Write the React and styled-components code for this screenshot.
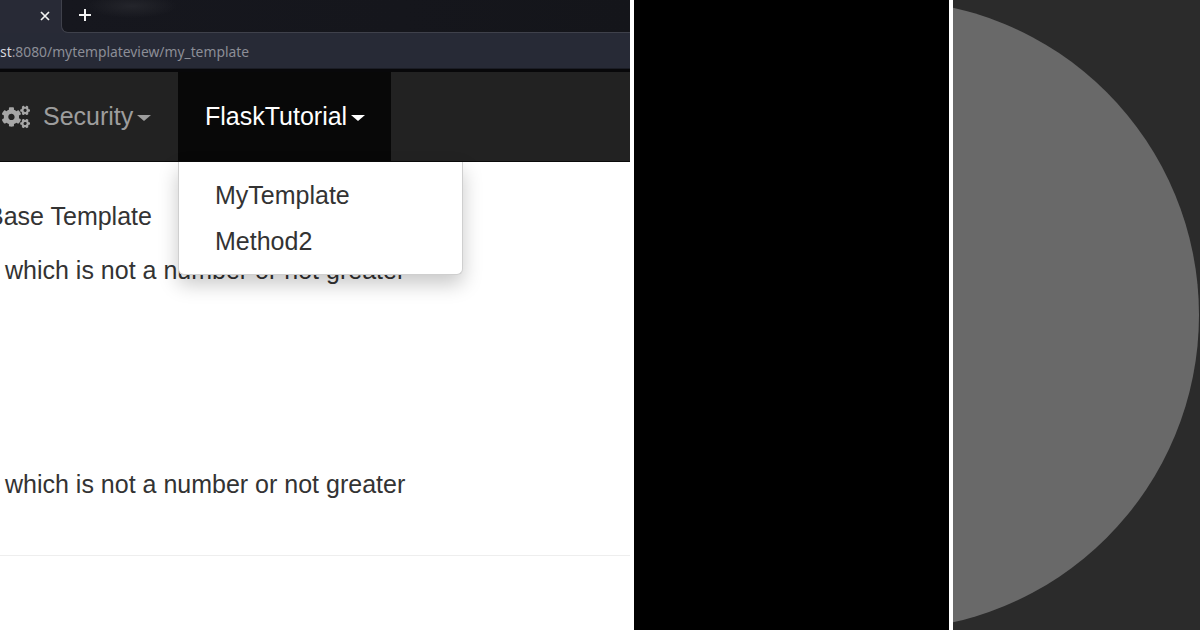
import React from 'react';
import styled, { createGlobalStyle } from 'styled-components';
import { FaCogs } from 'react-icons/fa';

const GlobalStyle = createGlobalStyle`
    html, body {
        margin: 0;
        padding: 0;
        background: #ffffff;
    }
    body {
        font-family: "Liberation Sans", Arial, sans-serif;
    }
`;

const Page = styled.div`
    display: grid;
    grid-template-columns: 630px 4px 315px 4px 247px;
    width: 1200px;
    height: 630px;
    overflow: hidden;
    background: #ffffff;
`;

const Gap = styled.div`
    background: #ffffff;
`;

const BlackPanel = styled.div`
    background: #000000;
`;

const CirclePanel = styled.div`
    background: #2b2b2b;
    overflow: hidden;
`;

const Shot = styled.div`
    position: relative;
    display: flex;
    flex-direction: column;
    height: 630px;
    overflow: hidden;
`;

const TabStrip = styled.div`
    display: flex;
    height: 33px;
    background: #282a36;
`;

const ActiveTab = styled.div`
    display: flex;
    align-items: center;
    justify-content: flex-end;
    width: 61px;
    padding: 0 11px 2px 0;
    box-sizing: border-box;
`;

const TabRest = styled.div`
    flex: 1;
    display: flex;
    align-items: center;
    padding: 0 0 2px 16px;
    background:
        radial-gradient(ellipse 45px 12px at 70px 6px, #24252b, transparent),
        linear-gradient(90deg, #16171e, #15161c 60%, #14151a);
    border-left: 1px solid #3f414b;
    border-bottom: 1px solid #3f414b;
    border-bottom-left-radius: 7px;
`;

const UrlBar = styled.div`
    display: flex;
    align-items: center;
    height: 36px;
    padding-top: 1px;
    box-sizing: border-box;
    background: #272a36;
    border-bottom: 1px solid #1b1d25;
    font-family: "Noto Sans", sans-serif;
    font-size: 13.85px;
    color: #8c8e97;
`;

const UrlHost = styled.span`
    color: #d8d8dc;
`;

const Navbar = styled.nav`
    display: flex;
    height: 93px;
    box-sizing: border-box;
    background: #222222;
    border-top: 3px solid #08080a;
    border-bottom: 1px solid #0a0a0a;
`;

const SecurityItem = styled.div`
    display: flex;
    align-items: center;
    width: 178px;
    padding-left: 2px;
    box-sizing: border-box;
    color: #9d9d9d;
    font-size: 25px;
`;

const GearIcon = styled(FaCogs)`
    width: 28px;
    height: 28px;
    margin-right: 13px;
    color: #a6a6a6;
`;

const ActiveItem = styled.div`
    display: flex;
    align-items: center;
    width: 213px;
    padding-left: 27px;
    box-sizing: border-box;
    background: #080808;
    color: #ffffff;
    font-size: 25px;
`;

const Caret = styled.span`
    width: 0;
    height: 0;
    margin: 2px 0 0 ${(p) => p.$gap}px;
    border-top: 6px solid ${(p) => p.$color};
    border-left: 7px solid transparent;
    border-right: 7px solid transparent;
`;

const Content = styled.main`
    flex: 1;
    padding-top: 40px;
    color: #333333;
    font-size: 25px;
    line-height: 28px;
`;

const Line = styled.p`
    margin: 0 0 ${(p) => p.$after}px ${(p) => p.$left}px;
    white-space: nowrap;
`;

const Rule = styled.hr`
    margin: 0;
    border: 0;
    border-top: 1px solid #eeeeee;
`;

const Dropdown = styled.ul`
    position: absolute;
    top: 162px;
    left: 178px;
    width: 285px;
    height: 113px;
    margin: 0;
    padding: 10px 0 0 36px;
    box-sizing: border-box;
    list-style: none;
    background: #ffffff;
    border: 1px solid #cfcfcf;
    border-top: 0;
    border-radius: 0 0 6px 6px;
    box-shadow: 0 9px 20px rgba(0, 0, 0, 0.22);
    color: #333333;
    font-size: 25px;
`;

const DropdownItem = styled.li`
    height: 46px;
    line-height: 47px;
`;

const Circle = () => (
    <svg width="247" height="630" viewBox="953 0 247 630">
        <circle cx="884" cy="315" r="315" fill="#696969" />
    </svg>
);

const App = () => {
    return (
        <Page>
            <GlobalStyle />
            <Shot>
                <TabStrip>
                    <ActiveTab>
                        <svg width="10" height="10" viewBox="0 0 10 10">
                            <path d="M1 1l8 8M9 1l-8 8" stroke="#f2f2f2" strokeWidth="1.7" />
                        </svg>
                    </ActiveTab>
                    <TabRest>
                        <svg width="14" height="14" viewBox="0 0 14 14">
                            <path d="M7 1v12M1 7h12" stroke="#f2f2f2" strokeWidth="2" />
                        </svg>
                    </TabRest>
                </TabStrip>
                <UrlBar>
                    <UrlHost>st</UrlHost>:8080/mytemplateview/my_template
                </UrlBar>
                <Navbar>
                    <SecurityItem>
                        <GearIcon />
                        Security
                        <Caret $gap={4} $color="#9d9d9d" />
                    </SecurityItem>
                    <ActiveItem>
                        FlaskTutorial
                        <Caret $gap={4} $color="#ffffff" />
                    </ActiveItem>
                </Navbar>
                <Content>
                    <Line $after={26} $left={-13}>Base Template</Line>
                    <Line $after={186} $left={5}>which is not a number or not greater</Line>
                    <Line $after={57} $left={5}>which is not a number or not greater</Line>
                    <Rule />
                </Content>
                <Dropdown>
                    <DropdownItem>MyTemplate</DropdownItem>
                    <DropdownItem>Method2</DropdownItem>
                </Dropdown>
            </Shot>
            <Gap />
            <BlackPanel />
            <Gap />
            <CirclePanel>
                <Circle />
            </CirclePanel>
        </Page>
    );
};

export default App;
